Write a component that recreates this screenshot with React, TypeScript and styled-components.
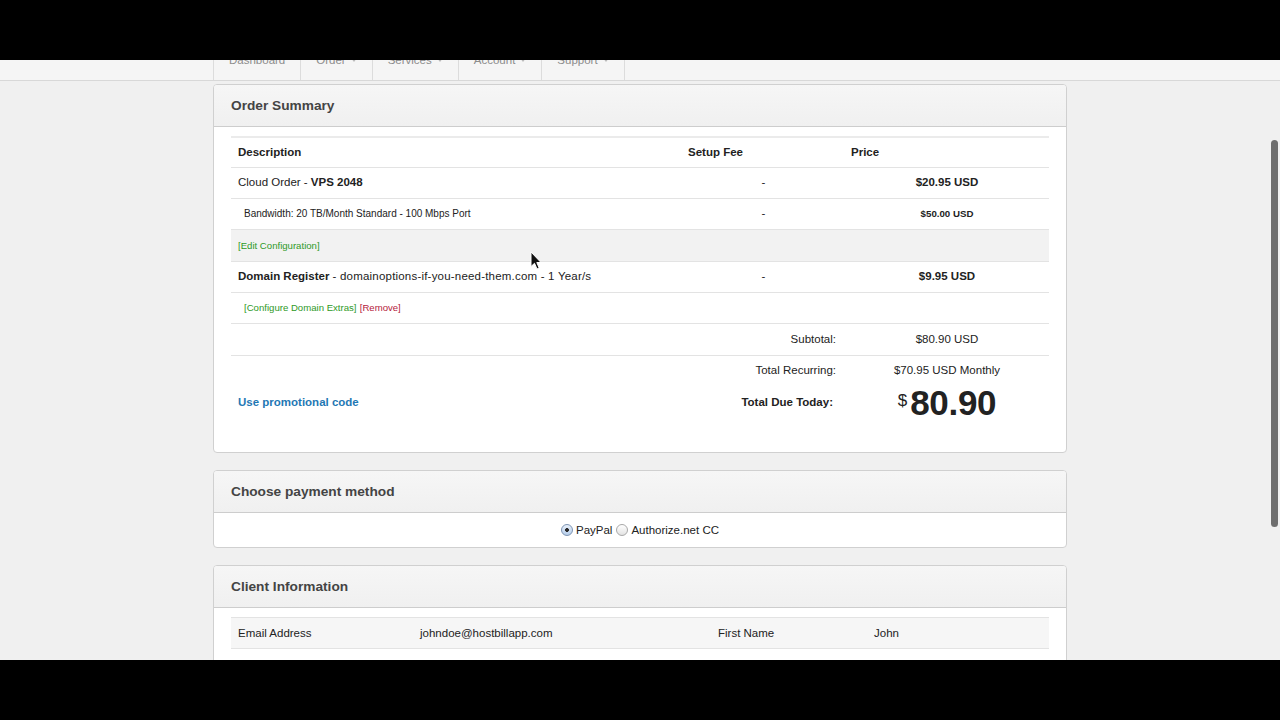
import React from "react";
import styled, { createGlobalStyle } from "styled-components";

const GlobalStyle = createGlobalStyle`
  html, body { margin: 0; padding: 0; background: #000; }
  body {
    font-family: "Liberation Sans", Arial, Helvetica, sans-serif;
    font-size: 11.5px;
    color: #222;
  }
  * { box-sizing: border-box; }
`;

const Screen = styled.div`
  width: 1280px;
  height: 720px;
  display: flex;
  flex-direction: column;
  background: #000;
  overflow: hidden;
`;

const Letterbox = styled.div`
  flex: 0 0 60px;
  background: #000;
`;

const Viewport = styled.div`
  position: relative;
  flex: 0 0 600px;
  overflow: hidden;
  background: #f0f0f0;
`;

const Page = styled.div`
  margin-top: -20px;
  display: flex;
  flex-direction: column;
`;

const NavStrip = styled.div`
  height: 41px;
  background: #f5f5f5;
  border-bottom: 1px solid #d8d8d8;
`;

const NavList = styled.nav`
  width: 854px;
  height: 100%;
  margin: 0 auto;
  display: flex;
`;

const NavTab = styled.div<{ $first?: boolean }>`
  display: flex;
  align-items: center;
  gap: 5px;
  padding: 0 15px;
  border-right: 1px solid #dcdcdc;
  border-left: ${(p) => (p.$first ? "1px solid #dcdcdc" : "none")};
  color: #8c8c8c;
  font-size: 11.5px;
`;

const Caret = styled.span`
  width: 0;
  height: 0;
  border-left: 3px solid transparent;
  border-right: 3px solid transparent;
  border-top: 4px solid #b8b8b8;
`;

const Main = styled.main`
  width: 854px;
  margin: 0 auto;
  padding-top: 3px;
  display: flex;
  flex-direction: column;
  gap: 17px;
`;

const Panel = styled.section`
  background: #fff;
  border: 1px solid #d0d0d0;
  border-radius: 4px;
  overflow: hidden;
`;

const PanelHeader = styled.header`
  height: 42px;
  padding: 0 17px;
  display: flex;
  align-items: center;
  background: linear-gradient(#f6f6f6, #f0f0f0);
  border-bottom: 1px solid #cdcdcd;
  font-size: 13.7px;
  font-weight: bold;
  color: #444;
`;

const PanelBody = styled.div<{ $bottom?: number }>`
  padding: 9px 17px ${(p) => p.$bottom ?? 9}px;
`;

const Table = styled.table`
  width: 100%;
  border-collapse: collapse;
  table-layout: fixed;
  border-top: 2px solid #ebebeb;
`;

const Row = styled.tr<{ $shaded?: boolean; $noLine?: boolean }>`
  background: ${(p) => (p.$shaded ? "#f2f2f2" : "transparent")};
  border-bottom: ${(p) => (p.$noLine ? "none" : "1px solid #e3e3e3")};
`;

const Cell = styled.td<{
  $align?: "left" | "center" | "right";
  $indent?: boolean;
  $size?: number;
  $bold?: boolean;
  $padRight?: number;
}>`
  height: 31.4px;
  padding: 0 ${(p) => p.$padRight ?? 7}px 0 ${(p) => (p.$indent ? 13 : 7)}px;
  text-align: ${(p) => p.$align ?? "left"};
  font-size: ${(p) => p.$size ?? 11.5}px;
  font-weight: ${(p) => (p.$bold ? "bold" : "normal")};
  line-height: 1.2;
  color: #222;
  white-space: nowrap;
  vertical-align: middle;
`;

const HeadCell = styled.th<{ $pl?: number }>`
  height: 30px;
  padding: 0 0 0 ${(p) => p.$pl ?? 7}px;
  text-align: left;
  font-size: 11.5px;
  font-weight: bold;
  color: #222;
`;

const Strong = styled.b`
  font-weight: bold;
  color: #222;
`;

const DomainText = styled.span`
  letter-spacing: 0.2px;
`;

const ActionLink = styled.a<{ $tone: "green" | "red" }>`
  font-size: 9.6px;
  color: ${(p) => (p.$tone === "green" ? "#2f9a28" : "#b5213c")};
  text-decoration: none;
`;

const PromoLink = styled.a`
  font-size: 11.5px;
  font-weight: bold;
  color: #1f78b4;
  text-decoration: none;
`;

const DueAmount = styled.span`
  display: inline-flex;
  align-items: center;
  gap: 3px;
  height: 31px;
  color: #222;
`;

const DueCurrency = styled.span`
  font-size: 17px;
  line-height: 17px;
  margin-top: -3px;
`;

const DueNumber = styled.span`
  font-size: 35px;
  line-height: 31px;
  font-weight: bold;
  letter-spacing: -0.3px;
`;

const RadioGroup = styled.div`
  height: 34px;
  display: flex;
  align-items: center;
  justify-content: center;
  font-size: 11.5px;
  color: #222;
`;

const RadioOption = styled.label`
  display: inline-flex;
  align-items: center;
  gap: 3px;
  margin: 0 2px;
`;

const RadioDot = styled.span<{ $checked?: boolean }>`
  width: 12px;
  height: 12px;
  border-radius: 50%;
  border: 1px solid ${(p) => (p.$checked ? "#7d94b3" : "#a8a8a8")};
  background: ${(p) =>
    p.$checked
      ? "radial-gradient(circle, #2a2a2a 0 1.6px, transparent 2.2px), linear-gradient(#e8f0fa, #b5cdea)"
      : "linear-gradient(#ffffff, #e3e3e3)"};
  display: inline-block;
`;

const InfoTable = styled.table`
  width: 100%;
  border-collapse: collapse;
  table-layout: fixed;
`;

const InfoRow = styled.tr`
  background: #f6f6f6;
  border-top: 1px solid #e3e3e3;
  border-bottom: 1px solid #e3e3e3;
`;

const InfoCell = styled.td`
  height: 31px;
  padding: 0 7px;
  font-size: 11.5px;
  color: #222;
  white-space: nowrap;
`;

const ScrollThumb = styled.div`
  position: absolute;
  right: 2px;
  top: 80px;
  width: 7px;
  height: 387px;
  border-radius: 4px;
  background: #6e6e6e;
`;

const Cursor = styled.svg`
  position: absolute;
  left: 530px;
  top: 191px;
  width: 12px;
  height: 19px;
`;

const navItems = [
  { label: "Dashboard", caret: false },
  { label: "Order", caret: true },
  { label: "Services", caret: true },
  { label: "Account", caret: true },
  { label: "Support", caret: true },
];

export default function App() {
  return (
    <>
      <GlobalStyle />
      <Screen>
        <Letterbox />
        <Viewport>
          <Page>
            <NavStrip>
              <NavList>
                {navItems.map((n, i) => (
                  <NavTab key={n.label} $first={i === 0}>
                    {n.label}
                    {n.caret && <Caret />}
                  </NavTab>
                ))}
              </NavList>
            </NavStrip>
            <Main>
              <Panel>
                <PanelHeader>Order Summary</PanelHeader>
                <PanelBody $bottom={34}>
                  <Table>
                    <colgroup>
                      <col style={{ width: 451 }} />
                      <col style={{ width: 163 }} />
                      <col />
                    </colgroup>
                    <thead>
                      <Row>
                        <HeadCell>Description</HeadCell>
                        <HeadCell $pl={6}>Setup Fee</HeadCell>
                        <HeadCell $pl={6}>Price</HeadCell>
                      </Row>
                    </thead>
                    <tbody>
                      <Row>
                        <Cell>
                          Cloud Order - <Strong>VPS 2048</Strong>
                        </Cell>
                        <Cell $align="center">-</Cell>
                        <Cell $align="center" $bold>
                          $20.95 USD
                        </Cell>
                      </Row>
                      <Row>
                        <Cell $indent $size={10}>
                          Bandwidth: 20 TB/Month Standard - 100 Mbps Port
                        </Cell>
                        <Cell $align="center">-</Cell>
                        <Cell $align="center" $bold $size={9.7}>
                          $50.00 USD
                        </Cell>
                      </Row>
                      <Row $shaded>
                        <Cell>
                          <ActionLink $tone="green">[Edit Configuration]</ActionLink>
                        </Cell>
                        <Cell />
                        <Cell />
                      </Row>
                      <Row>
                        <Cell>
                          <Strong>Domain Register</Strong>{" "}
                          <DomainText>- domainoptions-if-you-need-them.com - 1 Year/s</DomainText>
                        </Cell>
                        <Cell $align="center">-</Cell>
                        <Cell $align="center" $bold>
                          $9.95 USD
                        </Cell>
                      </Row>
                      <Row>
                        <Cell $indent>
                          <ActionLink $tone="green">[Configure Domain Extras]</ActionLink>{" "}
                          <ActionLink $tone="red">[Remove]</ActionLink>
                        </Cell>
                        <Cell />
                        <Cell />
                      </Row>
                      <Row>
                        <Cell />
                        <Cell $align="right" $padRight={9}>
                          Subtotal:
                        </Cell>
                        <Cell $align="center">$80.90 USD</Cell>
                      </Row>
                      <Row $noLine>
                        <Cell />
                        <Cell $align="right" $padRight={9}>
                          Total Recurring:
                        </Cell>
                        <Cell $align="center">$70.95 USD Monthly</Cell>
                      </Row>
                      <Row $noLine>
                        <Cell>
                          <PromoLink>Use promotional code</PromoLink>
                        </Cell>
                        <Cell $align="right" $padRight={12} $bold>
                          Total Due Today:
                        </Cell>
                        <Cell $align="center">
                          <DueAmount>
                            <DueCurrency>$</DueCurrency>
                            <DueNumber>80.90</DueNumber>
                          </DueAmount>
                        </Cell>
                      </Row>
                    </tbody>
                  </Table>
                </PanelBody>
              </Panel>

              <Panel>
                <PanelHeader>Choose payment method</PanelHeader>
                <RadioGroup>
                  <RadioOption>
                    <RadioDot $checked />
                    PayPal
                  </RadioOption>
                  <RadioOption>
                    <RadioDot />
                    Authorize.net CC
                  </RadioOption>
                </RadioGroup>
              </Panel>

              <Panel>
                <PanelHeader>Client Information</PanelHeader>
                <PanelBody $bottom={40}>
                  <InfoTable>
                    <colgroup>
                      <col style={{ width: 182 }} />
                      <col style={{ width: 298 }} />
                      <col style={{ width: 156 }} />
                      <col />
                    </colgroup>
                    <tbody>
                      <InfoRow>
                        <InfoCell>Email Address</InfoCell>
                        <InfoCell>johndoe@hostbillapp.com</InfoCell>
                        <InfoCell>First Name</InfoCell>
                        <InfoCell>John</InfoCell>
                      </InfoRow>
                    </tbody>
                  </InfoTable>
                </PanelBody>
              </Panel>
            </Main>
          </Page>
          <ScrollThumb />
          <Cursor viewBox="0 0 12 19">
            <path
              d="M1 1 L1 15.5 L4.5 12.3 L7 18 L9.2 17 L6.8 11.5 L11 11.5 Z"
              fill="#111"
              stroke="#fff"
              strokeWidth="1"
              strokeLinejoin="round"
            />
          </Cursor>
        </Viewport>
        <Letterbox />
      </Screen>
    </>
  );
}
